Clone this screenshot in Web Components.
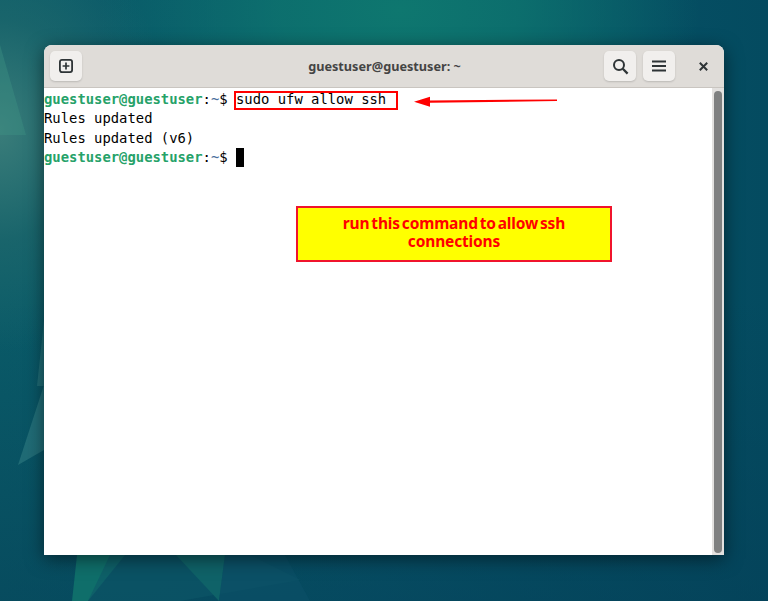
<!DOCTYPE html>
<html>
<head>
<meta charset="utf-8">
<title>guestuser@guestuser: ~</title>
<style>
  html, body { margin: 0; height: 100%; overflow: hidden; }
</style>
</head>
<body>
<gnome-desktop>
  <term-window title="guestuser@guestuser: ~">
    <term-line><term-prompt></term-prompt>sudo ufw allow ssh</term-line>
    <term-line>Rules updated</term-line>
    <term-line>Rules updated (v6)</term-line>
    <term-line><term-prompt></term-prompt><term-cursor></term-cursor></term-line>
    <shot-notes slot="notes"></shot-notes>
  </term-window>
</gnome-desktop>

<script>
class GnomeDesktop extends HTMLElement {
	constructor() {
		super()
		this.attachShadow({ mode: 'open' })
		this.shadowRoot.innerHTML = `
      <style>
        :host {
          display: block;
          position: relative;
          width: 768px;
          height: 601px;
          overflow: hidden;
          box-sizing: border-box;
          padding: 45px 44px 46px 44px;
          background:
            radial-gradient(ellipse 300px 190px at 400px 10px, #0e776f 0%, rgba(14,119,111,0.75) 40%, rgba(14,119,111,0) 100%),
            radial-gradient(ellipse 170px 220px at 0px 130px, #3a7d7a 0%, rgba(40,110,110,0.5) 50%, rgba(30,100,105,0) 100%),
            linear-gradient(180deg, rgba(4,60,85,0) 50%, rgba(4,60,85,0.5) 100%),
            linear-gradient(90deg, #0a5b68 0%, #07566a 50%, #044b60 100%);
        }
        svg {
          position: absolute;
          inset: 0;
        }
      </style>
      <svg width="768" height="601" viewBox="0 0 768 601">
        <polygon points="0,45 26,135 0,135" fill="#3f9484" opacity="0.4"/>
        <polygon points="44,320 37,386 44,386" fill="#3f8a8c" opacity="0.4"/>
        <polygon points="44,385 18,465 44,450" fill="#3f8a8c" opacity="0.45"/>
        <polygon points="72,601 77,555 125,555 88,601" fill="#0f6e6a"/>
        <polygon points="110,555 250,555 300,580 180,601 88,601" fill="#0d5768" opacity="0.6"/>
        <polygon points="176,555 225,555 219,601" fill="#0f6268"/>
        <polygon points="225,555 285,555 310,601 219,601" fill="#0b5068" opacity="0.6"/>
      </svg>
      <slot></slot>
    `
	}
}

class TermWindow extends HTMLElement {
	constructor() {
		super()
		this.attachShadow({ mode: 'open' })
		this.shadowRoot.innerHTML = `
      <style>
        :host {
          display: flex;
          flex-direction: column;
          position: relative;
          height: 510px;
          border-radius: 8px 8px 0 0;
          box-shadow: 0 4px 18px rgba(0,0,0,0.5);
          background: #fff;
        }
        header {
          flex: none;
          height: 43px;
          box-sizing: border-box;
          display: grid;
          grid-template-columns: 1fr auto 1fr;
          align-items: center;
          padding: 0 5px 0 6px;
          background: #dfdcd8;
          border-radius: 8px 8px 0 0;
          border-bottom: 1px solid #c9c5c0;
          font: bold 12.7px "Noto Sans", "Open Sans", sans-serif;
          color: #444;
        }
        h1 {
          margin: 0;
          font: inherit;
          text-align: center;
        }
        .end {
          display: flex;
          justify-content: flex-end;
          align-items: center;
          gap: 7px;
        }
        .close {
          width: 32px;
          height: 32px;
          margin-left: 5px;
          display: flex;
          align-items: center;
          justify-content: center;
        }
        main {
          flex: 1;
          display: flex;
          min-height: 0;
          position: relative;
        }
        #screen {
          flex: 1;
          padding-top: 2px;
          font: 13.87px/19.3px "DejaVu Sans Mono", monospace;
          color: #000;
        }
        #scroll {
          flex: none;
          width: 12px;
          box-sizing: border-box;
          padding: 3px 2px 2px 2px;
          background: #e3e1df;
          display: flex;
        }
        #scroll div {
          flex: 1;
          background: #7f8080;
          border-radius: 4px;
        }
      </style>
      <header>
        <div>
          <head-button>
            <svg width="16" height="16" viewBox="0 0 16 16" fill="none" stroke="#2e3436">
              <rect x="1.9" y="1.9" width="12.2" height="12.2" rx="2" stroke-width="1.8"/>
              <path d="M8 4.6v6.8M4.6 8h6.8" stroke-width="1.7"/>
            </svg>
          </head-button>
        </div>
        <h1></h1>
        <div class="end">
          <head-button>
            <svg width="17" height="17" viewBox="0 0 17 17" fill="none" stroke="#2e3436">
              <circle cx="7" cy="7" r="5" stroke-width="2"/>
              <path d="M10.8 10.8l4.8 4.8" stroke-width="2.3"/>
            </svg>
          </head-button>
          <head-button>
            <svg width="14" height="12" viewBox="0 0 14 12" stroke="#2e3436" stroke-width="1.8">
              <path d="M0 1.5h14M0 6h14M0 10.500h14"/>
            </svg>
          </head-button>
          <div class="close">
            <svg width="9" height="9" viewBox="0 0 9 9" stroke="#2e3436" stroke-width="2">
              <path d="M.8.8l7.400 7.400M8.200.8L.8 8.200"/>
            </svg>
          </div>
        </div>
      </header>
      <main>
        <div id="screen"><slot></slot></div>
        <div id="scroll"><div></div></div>
        <slot name="notes"></slot>
      </main>
    `
	}

	connectedCallback() {
		this.shadowRoot.querySelector('h1').textContent = this.getAttribute('title')
	}
}

class HeadButton extends HTMLElement {
	constructor() {
		super()
		this.attachShadow({ mode: 'open' })
		this.shadowRoot.innerHTML = `
      <style>
        :host {
          flex: none;
          width: 32px;
          height: 30px;
          display: flex;
          align-items: center;
          justify-content: center;
          box-sizing: border-box;
          background: #f1efed;
          border-radius: 5px;
          box-shadow: 0 1px 2px rgba(0,0,0,0.16);
        }
      </style>
      <slot></slot>
    `
	}
}

class TermLine extends HTMLElement {
	constructor() {
		super()
		this.attachShadow({ mode: 'open' })
		this.shadowRoot.innerHTML = `<style>:host { display: block; height: 19.3px; white-space: pre; }</style><slot></slot>`
	}
}

class TermPrompt extends HTMLElement {
	constructor() {
		super()
		this.attachShadow({ mode: 'open' })
		this.shadowRoot.innerHTML = `<style>
        b { color: #26a269; font-weight: bold; }
        i { color: #4a6f9c; font-style: normal; }
      </style><b>guestuser@guestuser</b>:<i>~</i>$ `
	}
}

class TermCursor extends HTMLElement {
	constructor() {
		super()
		this.attachShadow({ mode: 'open' })
		this.shadowRoot.innerHTML = `
      <style>
        :host {
          display: inline-block;
          width: 8.35px;
          height: 19px;
          background: #000;
          vertical-align: top;
        }
      </style>
    `
	}
}

class ShotNotes extends HTMLElement {
	constructor() {
		super()
		this.attachShadow({ mode: 'open' })
		this.shadowRoot.innerHTML = `
      <style>
        :host { display: contents; }
        #box {
          position: absolute;
          left: 190px;
          top: 3px;
          width: 164px;
          height: 19px;
          box-sizing: border-box;
          border: 2.5px solid #f00;
        }
        #arrow {
          position: absolute;
          left: 368px;
          top: 4px;
        }
        #note {
          position: absolute;
          left: 252px;
          top: 117.5px;
          width: 316px;
          height: 56px;
          box-sizing: border-box;
          border: 2px solid #f0142c;
          background: #ff0;
          color: #f00;
          font: bold 15.5px/18px "Noto Sans", Arial, sans-serif;
          letter-spacing: -0.15px;
          word-spacing: -2px;
          text-align: center;
          display: flex;
          align-items: center;
          justify-content: center;
          padding: 0 30px 3px;
        }
      </style>
      <div id="box"></div>
      <svg id="arrow" width="148" height="18" viewBox="0 0 148 18">
        <path d="M2 9.800L18 4.800V8.400L145 7.400V9L18 10.800V14.800Z" fill="#f00"/>
      </svg>
      <div id="note">run this command to allow ssh connections</div>
    `
	}
}

customElements.define('gnome-desktop', GnomeDesktop)
customElements.define('term-window', TermWindow)
customElements.define('head-button', HeadButton)
customElements.define('term-line', TermLine)
customElements.define('term-prompt', TermPrompt)
customElements.define('term-cursor', TermCursor)
customElements.define('shot-notes', ShotNotes)
</script>
</body>
</html>
